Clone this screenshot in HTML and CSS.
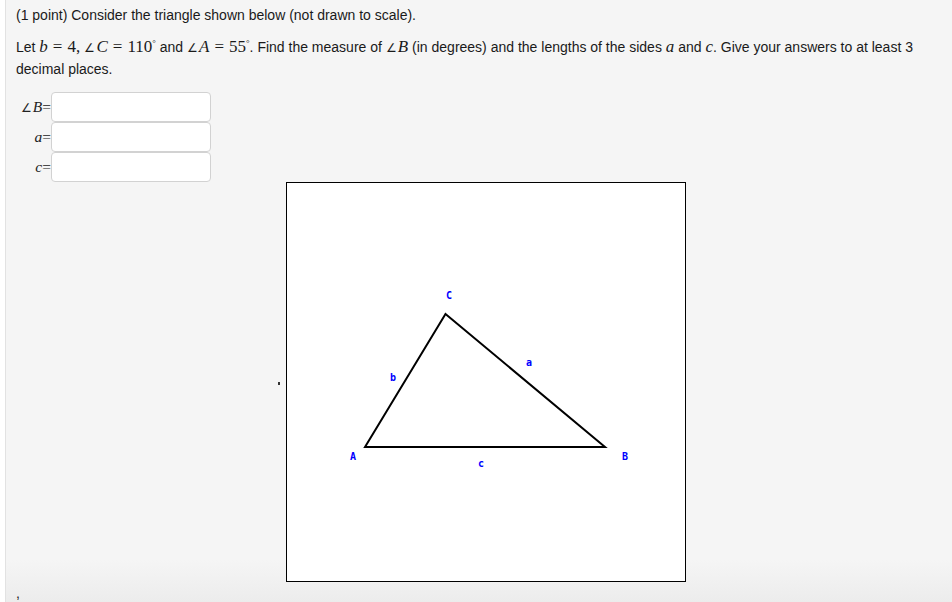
FILE: index.html
```html
<!DOCTYPE html>
<html>
<head>
<meta charset="utf-8">
<link rel="stylesheet" href="styles.css">
</head>
<body>
<div class="page">
  <p class="intro">(1 point) Consider the triangle shown below (not drawn to scale).</p>
  <p class="task">Let <span class="m"><i>b</i><span class="eq">=</span>4, <span class="ang">∠</span><i>C</i><span class="eq">=</span>110<sup>°</sup></span> and <span class="m"><span class="ang">∠</span><i>A</i><span class="eq">=</span>55<sup>°</sup></span>. Find the measure of <span class="m"><span class="ang">∠</span><i>B</i></span> (in degrees) and the lengths of the sides <span class="m"><i>a</i></span> and <span class="m"><i>c</i></span>. Give your answers to at least 3 decimal places.</p>
  <div class="answers">
    <label class="lbl"><span class="ang">∠</span><i>B</i>=</label><input class="ans" type="text">
    <label class="lbl"><i>a</i>=</label><input class="ans" type="text">
    <label class="lbl"><i>c</i>=</label><input class="ans" type="text">
  </div>
  <div class="figrow">
    <span class="dot"></span>
    <div class="figure">
      <svg width="398" height="398" viewBox="0 0 398 398">
        <polygon points="78,264 158.5,131 318,264" fill="none" stroke="#000" stroke-width="2" stroke-linejoin="miter"/>
        <g class="vl">
          <text x="162" y="116">C</text>
          <text x="106" y="198">b</text>
          <text x="242" y="183">a</text>
          <text x="66" y="277">A</text>
          <text x="194" y="284">c</text>
          <text x="338" y="277">B</text>
        </g>
      </svg>
    </div>
  </div>
  <p class="tail">,</p>
</div>
</body>
</html>
```

FILE: styles.css
```css
html, body {
  margin: 0;
  padding: 0;
  background: #fff;
}
body {
  width: 952px;
  height: 602px;
  overflow: hidden;
}
.page {
  margin-left: 5px;
  border-left: 1px solid #e2e2e2;
  height: 602px;
  box-sizing: border-box;
  padding: 5px 0 0 10px;
  background: linear-gradient(to bottom, #f5f5f5 0, #f5f5f5 560px, #ececec 602px);
  font-family: "Liberation Sans", Arial, sans-serif;
  font-size: 14px;
  color: #1a1a1a;
}
p {
  margin: 0;
}
.intro {
  line-height: 21px;
}
.task {
  margin-top: 10px;
  line-height: 21px;
  width: 920px;
}
.m {
  font-family: "Liberation Serif", "Times New Roman", serif;
  font-size: 17px;
}
.eq {
  margin: 0 5px;
}
.ang {
  font-size: 12px;
  margin-right: 1px;
}
.m sup {
  font-size: 9px;
  vertical-align: 6px;
  line-height: 0;
}
.answers {
  margin-top: 12px;
  display: grid;
  grid-template-columns: 35px 160px;
  row-gap: 0;
  align-items: center;
}
.lbl {
  text-align: right;
  font-family: "Liberation Serif", "Times New Roman", serif;
  font-size: 15.5px;
  color: #222;
  white-space: nowrap;
}
.ans {
  box-sizing: border-box;
  width: 160px;
  height: 30px;
  margin: 0;
  border: 1px solid #d2d2d2;
  border-radius: 4px;
  background: #fff;
  padding: 0 6px;
}
.figrow {
  display: flex;
  align-items: center;
  margin-top: 0;
  padding-left: 262px;
}
.dot {
  width: 2px;
  height: 3px;
  background: #333;
  margin-right: 6px;
  margin-top: 2px;
}
.figure {
  width: 398px;
  height: 398px;
  border: 1px solid #000;
  background: #fff;
}
.figure svg {
  display: block;
}
.vl text {
  font-family: "DejaVu Sans Mono", "Liberation Mono", monospace;
  font-weight: bold;
  font-size: 10px;
  fill: #0000ff;
  text-anchor: middle;
}
.tail {
  line-height: 21px;
  margin-top: 1px;
}
```
